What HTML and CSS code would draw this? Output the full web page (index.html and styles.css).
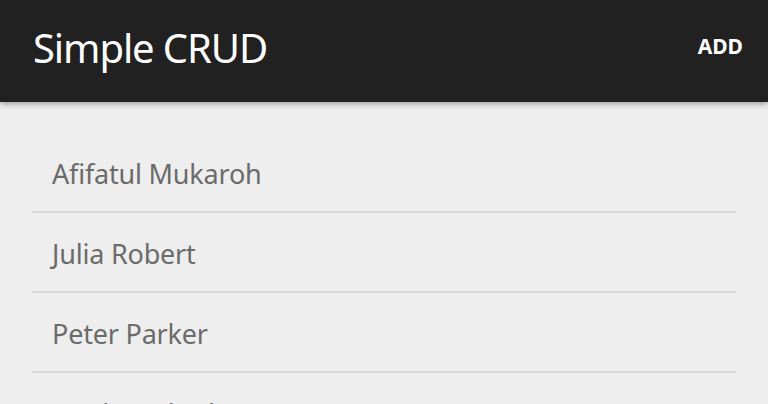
FILE: index.html
```html
<!DOCTYPE html>
<html>
<head>
<meta charset="utf-8">
<link rel="stylesheet" href="styles.css">
</head>
<body>
<header class="appbar">
  <h1 class="title">Simple CRUD</h1>
  <span class="action">ADD</span>
</header>
<main class="content">
  <ul class="list">
    <li class="item">Afifatul Mukaroh</li>
    <li class="item">Julia Robert</li>
    <li class="item">Peter Parker</li>
    <li class="item">Mark Zuckerberg</li>
  </ul>
</main>
</body>
</html>
```
FILE: styles.css
```css
html, body {
  margin: 0;
  padding: 0;
  background: #eeeeee;
  font-family: "Noto Sans", "Open Sans", sans-serif;
  width: 768px;
  height: 404px;
  overflow: hidden;
}
.appbar {
  height: 102px;
  background: #212121;
  display: flex;
  align-items: center;
  justify-content: space-between;
  padding: 0 25px 0 33px;
  box-sizing: border-box;
  box-shadow: 0 2px 6px rgba(0,0,0,0.35);
  position: relative;
  z-index: 1;
}
.title {
  margin: 0;
  color: #ffffff;
  font-weight: 400;
  font-size: 40px;
  letter-spacing: -1.1px;
  position: relative;
  top: -4px;
}
.action {
  color: #ffffff;
  font-weight: 700;
  font-size: 21px;
  position: relative;
  top: -5px;
}
.content {
  padding: 31px 32px 0 32px;
}
.list {
  list-style: none;
  margin: 0;
  padding: 0;
}
.item {
  height: 78px;
  box-sizing: border-box;
  padding: 2px 0 0 20px;
  border-bottom: 2px solid #d6d6d6;
  display: flex;
  align-items: center;
  color: #6b6b6b;
  font-size: 27px;
  letter-spacing: -0.2px;
}
.item {
  height: 80px;
}
```
